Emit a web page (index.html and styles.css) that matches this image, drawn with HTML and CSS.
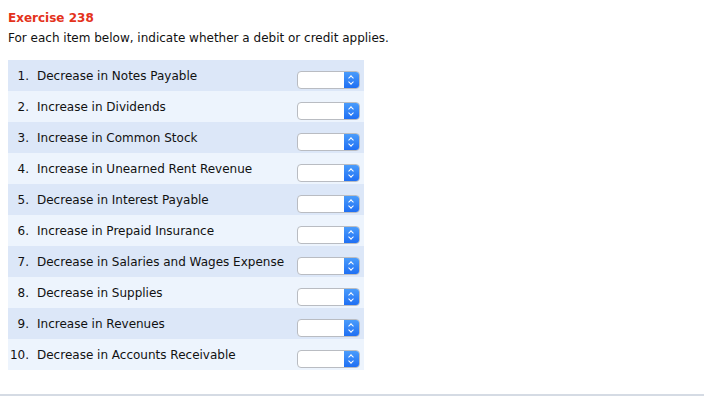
FILE: index.html
```html
<!DOCTYPE html>
<html lang="en">
<head>
<meta charset="UTF-8" />
<title>Exercise 238</title>
<link rel="stylesheet" href="styles.css">
</head>
<body>

<main>
  <h1>Exercise 238</h1>
  <p class="intro">For each item below, indicate whether a debit or credit applies.</p>

  <table class="items">
    <tbody>
      <tr><td class="num">1.</td><td class="text">Decrease in Notes Payable</td><td class="pick"><span class="select"><span class="arrows"></span></span></td></tr>
      <tr><td class="num">2.</td><td class="text">Increase in Dividends</td><td class="pick"><span class="select"><span class="arrows"></span></span></td></tr>
      <tr><td class="num">3.</td><td class="text">Increase in Common Stock</td><td class="pick"><span class="select"><span class="arrows"></span></span></td></tr>
      <tr><td class="num">4.</td><td class="text">Increase in Unearned Rent Revenue</td><td class="pick"><span class="select"><span class="arrows"></span></span></td></tr>
      <tr><td class="num">5.</td><td class="text">Decrease in Interest Payable</td><td class="pick"><span class="select"><span class="arrows"></span></span></td></tr>
      <tr><td class="num">6.</td><td class="text">Increase in Prepaid Insurance</td><td class="pick"><span class="select"><span class="arrows"></span></span></td></tr>
      <tr><td class="num">7.</td><td class="text">Decrease in Salaries and Wages Expense</td><td class="pick"><span class="select"><span class="arrows"></span></span></td></tr>
      <tr><td class="num">8.</td><td class="text">Decrease in Supplies</td><td class="pick"><span class="select"><span class="arrows"></span></span></td></tr>
      <tr><td class="num">9.</td><td class="text">Increase in Revenues</td><td class="pick"><span class="select"><span class="arrows"></span></span></td></tr>
      <tr><td class="num">10.</td><td class="text">Decrease in Accounts Receivable</td><td class="pick"><span class="select"><span class="arrows"></span></span></td></tr>
    </tbody>
  </table>
</main>

<hr class="footer-line" />

</body>
</html>
```

FILE: styles.css
```css
body {
  margin: 0;
  padding: 0;
  background: #fff;
  font-family: "DejaVu Sans", Verdana, sans-serif;
  color: #111;
}
main {
  padding: 10px 8px 0 8px;
  height: 394px;
  box-sizing: border-box;
}
h1 {
  margin: 0;
  font-size: 12px;
  line-height: 16px;
  color: #e4321b;
  font-weight: bold;
}
.intro {
  margin: 4px 0 0 0;
  font-size: 12px;
  line-height: 16px;
}
.items {
  margin-top: 14px;
  width: 356px;
  border-collapse: collapse;
  font-size: 12px;
}
.items tr {
  height: 31px;
  background: #dce7f8;
}
.items tr:nth-child(even) {
  background: #edf4fd;
}
.items td {
  padding: 0;
  vertical-align: top;
  line-height: 16px;
}
.items td.num {
  width: 21px;
  text-align: right;
  padding-top: 8px;
}
.items td.text {
  padding: 8px 0 0 8px;
}
.items td.pick {
  width: 67px;
  padding-top: 11px;
}
.select {
  display: flex;
  justify-content: flex-end;
  width: 63px;
  height: 18px;
  box-sizing: border-box;
  border: 1px solid #b9bcc2;
  border-radius: 4px;
  background: #fff;
  overflow: hidden;
}
.arrows {
  position: relative;
  width: 15px;
  height: 100%;
  background: linear-gradient(#4a9cfb, #1f6ff3);
}
.arrows::before, .arrows::after {
  content: "";
  position: absolute;
  left: 5px;
  width: 3px;
  height: 3px;
  border-left: 1.5px solid #fff;
  border-top: 1.5px solid #fff;
}
.arrows::before {
  top: 4px;
  transform: rotate(45deg);
}
.arrows::after {
  top: 8px;
  transform: rotate(225deg);
}
.footer-line {
  margin: 0;
  border: none;
  border-top: 2px solid #d5dbe4;
}
```
